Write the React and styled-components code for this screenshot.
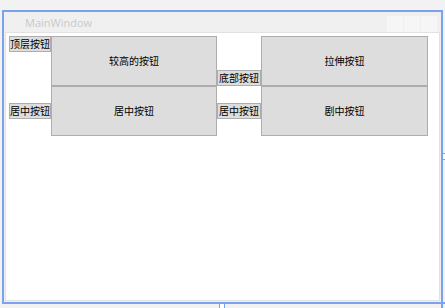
import styled, { createGlobalStyle } from "styled-components";

const GlobalStyle = createGlobalStyle`
  html, body {
    margin: 0;
    padding: 0;
    background: #f2f2f2;
  }
  body {
    width: 445px;
    height: 308px;
    overflow: hidden;
    font-family: "Noto Sans CJK SC", "Noto Sans", sans-serif;
  }
`;

export default function App() {
  return (
    <>
      <GlobalStyle />
      <Surface>
        <Window>
          <TitleBar>
            <Title>MainWindow</Title>
            <Captions>
              <CaptionBox />
              <CaptionBox />
              <CaptionBox />
            </Captions>
          </TitleBar>
          <Content>
            <Layout>
              <Button $small $align="start">顶层按钮</Button>
              <Button>较高的按钮</Button>
              <Button $small $align="end">底部按钮</Button>
              <Button>拉伸按钮</Button>
              <Button $small $align="center">居中按钮</Button>
              <Button>居中按钮</Button>
              <Button $small $align="center">居中按钮</Button>
              <Button>剧中按钮</Button>
            </Layout>
          </Content>
        </Window>
        <GuideV />
        <GuideH />
        <Handle $side="bottom" />
        <Handle $side="right" />
      </Surface>
    </>
  );
}

const Surface = styled.div`
  position: relative;
  width: 445px;
  height: 308px;
  padding: 10px 0 0 2px;
  box-sizing: border-box;
`;

const Window = styled.div`
  width: 441px;
  height: 294px;
  box-sizing: border-box;
  border: 2px solid #7aa2ee;
  background: #f0f0f0;
  display: flex;
  flex-direction: column;
`;

const TitleBar = styled.div`
  height: 21px;
  display: flex;
  align-items: center;
  justify-content: space-between;
  padding: 0 4px 0 21px;
  flex-shrink: 0;
`;

const Title = styled.span`
  font-family: "Open Sans", "Liberation Sans", sans-serif;
  font-size: 11px;
  color: #c9c9c9;
  line-height: 1;
`;

const Captions = styled.div`
  display: flex;
  gap: 1px;
  align-self: flex-end;
  margin-bottom: 1px;
`;

const CaptionBox = styled.div`
  width: 16px;
  height: 16px;
  background: #f6f6f6;
`;

const Content = styled.div`
  flex: 1;
  margin: 0 2px 2px 2px;
  background: #ffffff;
  box-shadow: 0 0 0 1px #e2e2e2;
`;

const Layout = styled.div`
  display: grid;
  grid-template-columns: 42px 166px 44px 167px;
  grid-template-rows: 50px 50px;
  margin: 3px 0 0 3px;
`;

const Button = styled.div`
  box-sizing: border-box;
  background: #dddddd;
  border: 1px solid #adadad;
  color: #000;
  font-size: 10px;
  line-height: 12px;
  display: flex;
  align-items: center;
  justify-content: center;
  white-space: nowrap;
  overflow: hidden;
  height: ${(p) => (p.$small ? "16px" : "auto")};
  align-self: ${(p) => p.$align || "stretch"};
`;

const GuideV = styled.div`
  position: absolute;
  left: 441px;
  top: 300px;
  width: 2px;
  height: 8px;
  background: #7aa2ee;
`;

const GuideH = styled.div`
  position: absolute;
  left: 441px;
  top: 302px;
  width: 4px;
  height: 2px;
  background: #7aa2ee;
`;

const Handle = styled.div`
  position: absolute;
  box-sizing: border-box;
  border: 1px solid #7aa2ee;
  background: #ffffff;
  ${(p) =>
    p.$side === "bottom"
      ? "left: 219px; top: 303px; width: 6px; height: 6px;"
      : "left: 442px; top: 153px; width: 6px; height: 7px;"}
`;
